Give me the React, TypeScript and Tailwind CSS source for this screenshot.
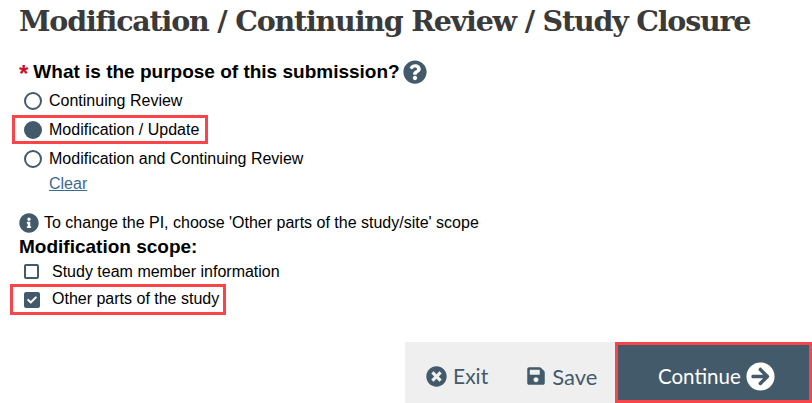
import React from 'react';
import { FaArrowCircleRight, FaCheck, FaInfoCircle, FaQuestionCircle, FaSave, FaTimesCircle } from 'react-icons/fa';

const sans = 'font-["Liberation_Sans",Arial,sans-serif]';

function Radio({ label, checked }: { label: string; checked?: boolean }) {
  return (
    <div className="flex items-center h-[29px] pl-[24px] gap-[7px]">
      <span
        className={
          checked
            ? 'w-[18px] h-[18px] rounded-full bg-[#435a6b]'
            : 'w-[18px] h-[18px] rounded-full border-2 border-[#435a6b] bg-white'
        }
      />
      <span className="text-[16px] leading-none text-black">{label}</span>
    </div>
  );
}

export default function App() {
  return (
    <div className={`w-[812px] h-[403px] bg-white overflow-hidden flex flex-col ${sans}`}>
      <h1 className='pl-[19px] pt-[3px] h-[40px] text-[28.5px] tracking-[-1.2px] leading-[36px] font-semibold text-[#3a3a3a] whitespace-nowrap font-["DejaVu_Serif",serif]'>
        Modification / Continuing Review / Study Closure
      </h1>

      <div className="mt-[16px] pl-[19px] pt-[2px] flex items-center h-[30px]">
        <span className="text-[#c8102e] text-[24px] leading-none font-bold mr-[5px] pt-[4px]">*</span>
        <span className="text-[19px] font-bold text-black">What is the purpose of this submission?</span>
        <FaQuestionCircle className="ml-[3px] text-[#435a6b] text-[24px]" />
      </div>

      <div className="flex flex-col">
        <Radio label="Continuing Review" />
        <div className="ml-[12px] w-[196px] h-[29px] border-[3px] border-[#f9454a] flex items-center pl-[9px] gap-[7px]">
          <span className="w-[18px] h-[18px] rounded-full bg-[#435a6b]" />
          <span className="text-[16px] leading-none text-black">Modification / Update</span>
        </div>
        <Radio label="Modification and Continuing Review" />
      </div>
      <a className="ml-[49px] text-[16px] leading-[22px] text-[#3d6a8f] underline">Clear</a>

      <div className="mt-[17px] pl-[19px] flex items-center gap-[5px] h-[22px]">
        <FaInfoCircle className="text-[#435a6b] text-[20px]" />
        <span className="text-[16px] text-black">To change the PI, choose 'Other parts of the study/site' scope</span>
      </div>
      <div className="pl-[19px] text-[19px] font-bold leading-[25px] text-black">Modification scope:</div>

      <div className="flex items-center h-[25px] pl-[24px] gap-[13px]">
        <span className="w-[15px] h-[15px] rounded-[2px] border-2 border-[#435a6b] bg-white" />
        <span className="text-[16px] leading-none text-black">Study team member information</span>
      </div>
      <div className="ml-[10px] w-[216px] h-[31px] border-[3px] border-[#f9454a] flex items-center pl-[11px] gap-[13px]">
        <span className="w-[16px] h-[16px] rounded-[2px] bg-[#435a6b] flex items-center justify-center">
          <FaCheck className="text-white text-[10px]" />
        </span>
        <span className="text-[16px] leading-none text-black -ml-px mb-[2px]">Other parts of the study</span>
      </div>

      <div className='mt-[27px] ml-[405px] w-[407px] h-[61px] bg-[#efefef] flex font-["Lato",sans-serif]'>
        <div className="flex items-center w-[210px] pt-[7px] text-[21px] text-[#435a6b]">
          <FaTimesCircle className="ml-[21px] text-[21px]" />
          <span className="ml-[6px]">Exit</span>
          <FaSave className="ml-[38px] text-[20px]" />
          <span className="ml-[6px] text-[22px]">Save</span>
        </div>
        <div className="w-[197px] h-[61px] bg-[#435a6b] border-[3px] border-[#f9454a] flex items-center pt-[7px] pl-[40px] gap-[5px] text-[20.5px] text-white">
          <span>Continue</span>
          <FaArrowCircleRight className="text-[29px]" />
        </div>
      </div>
    </div>
  );
}
